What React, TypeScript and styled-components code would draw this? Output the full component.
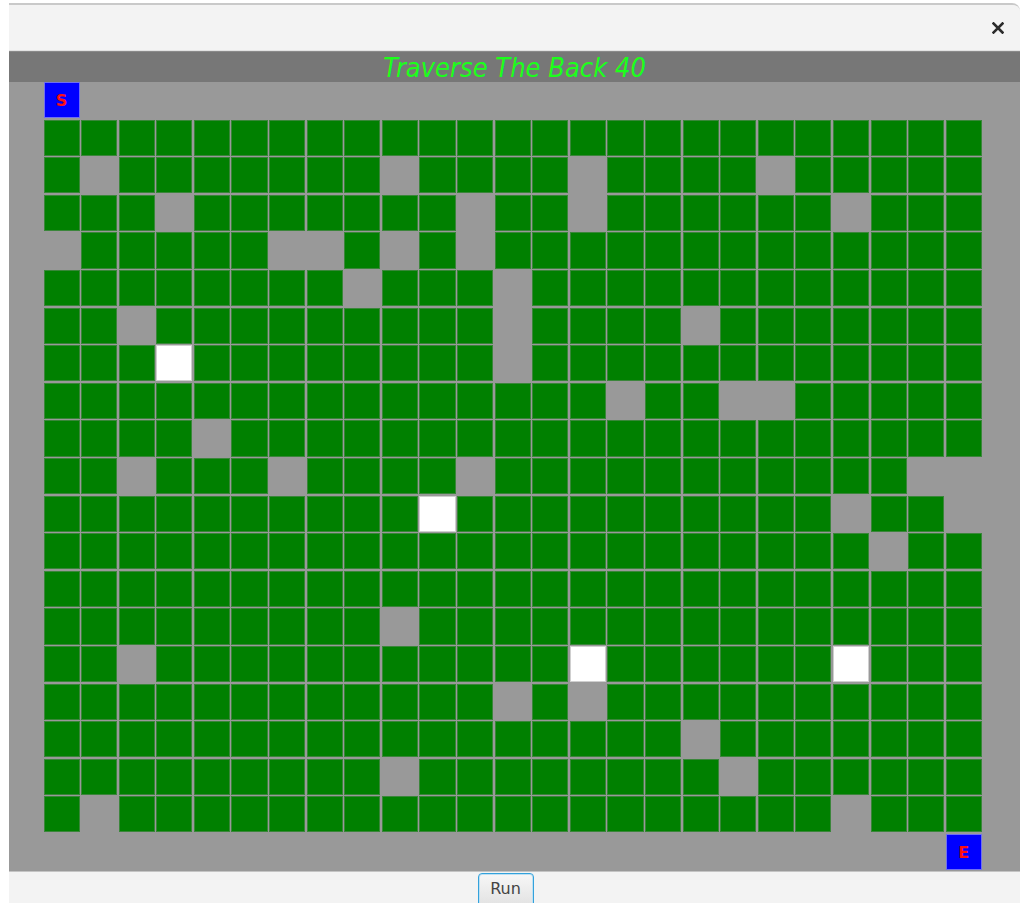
import React from 'react';
import styled, { createGlobalStyle } from 'styled-components';

const GlobalStyle = createGlobalStyle`
  html, body {
    margin: 0;
    padding: 0;
    background: #ffffff;
    font-family: "DejaVu Sans", "Liberation Sans", sans-serif;
  }
`;

type CellKind = 'field' | 'rock' | 'hay' | 'start' | 'end';

const INNER_COLS = 25;
const INNER_ROWS = 19;

// rocks (gray) and hay bales (white) per row, columns counted from 1
const obstacles: Record<number, { rock?: number[]; hay?: number[] }> = {
  2: { rock: [2, 10, 15, 20] },
  3: { rock: [4, 12, 15, 22] },
  4: { rock: [1, 7, 8, 10, 12] },
  5: { rock: [9, 13] },
  6: { rock: [3, 13, 18] },
  7: { rock: [13], hay: [4] },
  8: { rock: [16, 19, 20] },
  9: { rock: [5] },
  10: { rock: [3, 7, 12, 24, 25] },
  11: { rock: [22, 25], hay: [11] },
  12: { rock: [23] },
  14: { rock: [10] },
  15: { rock: [3], hay: [15, 22] },
  16: { rock: [13, 15] },
  17: { rock: [18] },
  18: { rock: [10, 19] },
  19: { rock: [2, 22] },
};

const buildBoard = (): CellKind[][] => {
  const rows: CellKind[][] = [];
  for (let r = 0; r <= INNER_ROWS + 1; r++) {
    const row: CellKind[] = [];
    for (let c = 0; c <= INNER_COLS + 1; c++) {
      const border = r === 0 || c === 0 || r === INNER_ROWS + 1 || c === INNER_COLS + 1;
      if (r === 0 && c === 1) row.push('start');
      else if (r === INNER_ROWS + 1 && c === INNER_COLS) row.push('end');
      else if (border) row.push('rock');
      else if (obstacles[r]?.hay?.includes(c)) row.push('hay');
      else if (obstacles[r]?.rock?.includes(c)) row.push('rock');
      else row.push('field');
    }
    rows.push(row);
  }
  return rows;
};

const board = buildBoard();

export default function App() {
  return (
    <>
      <GlobalStyle />
      <Desktop>
        <Window>
          <Header>
            <CloseButton aria-label="close">
              <svg width="12" height="12" viewBox="0 0 12 12">
                <path d="M1.5 1.5 L10.5 10.5 M10.5 1.5 L1.5 10.5" stroke="#2b2b2b" strokeWidth="2.6" strokeLinecap="square" />
              </svg>
            </CloseButton>
          </Header>
          <TitleBar>
            <Title>Traverse The Back 40</Title>
          </TitleBar>
          <Field>
            {board.map((row, r) =>
              row.map((kind, c) => (
                <Cell key={`${r}-${c}`} $kind={kind}>
                  {kind === 'start' && 'S'}
                  {kind === 'end' && 'E'}
                </Cell>
              ))
            )}
          </Field>
          <Footer>
            <RunButton>Run</RunButton>
          </Footer>
        </Window>
      </Desktop>
    </>
  );
}

const Desktop = styled.div`
  width: 1024px;
  height: 903px;
  padding: 3px 4px 0 9px;
  box-sizing: border-box;
  overflow: hidden;
  background: #ffffff;
`;

const Window = styled.div`
  display: flex;
  flex-direction: column;
  border-top: 2px solid #c9c9c9;
  border-top-right-radius: 8px;
  overflow: hidden;
  background: #f3f3f3;
`;

const Header = styled.div`
  height: 46px;
  box-sizing: border-box;
  display: flex;
  align-items: center;
  justify-content: flex-end;
  padding: 0 16px 0 0;
  background: #f3f3f3;
  border-bottom: 1px solid #e2e2e2;
`;

const CloseButton = styled.div`
  display: flex;
  width: 12px;
  height: 12px;
  margin-top: 1px;
`;

const TitleBar = styled.div`
  height: 31px;
  display: flex;
  align-items: center;
  justify-content: center;
  background: #777777;
  border-top: 1px solid #8a8a8a;
  box-sizing: border-box;
`;

const Title = styled.span`
  font-family: "DejaVu Sans Condensed", "DejaVu Sans", sans-serif;
  font-stretch: condensed;
  font-style: italic;
  font-size: 27px;
  color: #1bff1b;
  line-height: 1;
`;

const Field = styled.div`
  display: grid;
  grid-template-columns: 34.5px repeat(25, 37.6px) 1fr;
  grid-template-rows: 37.7px repeat(20, 37.6px);
  background: #999999;
  height: 789px;
`;

const cellColors: Record<CellKind, { bg: string; edge: string }> = {
  field: { bg: '#008000', edge: '#3a863a' },
  rock: { bg: '#999999', edge: '#999999' },
  hay: { bg: '#ffffff', edge: '#cfcfcf' },
  start: { bg: '#0000ff', edge: '#7070f0' },
  end: { bg: '#0000ff', edge: '#7070f0' },
};

const Cell = styled.div<{ $kind: CellKind }>`
  margin: 0 1.5px 1.5px 0;
  background: ${({ $kind }) => cellColors[$kind].bg};
  border: 1px solid ${({ $kind }) => cellColors[$kind].edge};
  display: flex;
  align-items: center;
  justify-content: center;
  font-family: "DejaVu Sans", sans-serif;
  font-weight: bold;
  font-size: 16px;
  color: #ff1010;
`;

const Footer = styled.div`
  flex: 1;
  height: 32px;
  display: flex;
  justify-content: center;
  align-items: flex-start;
  padding: 1px 18px 0 0;
  background: #f3f3f3;
  box-sizing: border-box;
  border-top: 1px solid #c4c4c4;
`;

const RunButton = styled.button`
  width: 56px;
  height: 34px;
  border: 1px solid #33a2dc;
  border-radius: 4px;
  box-shadow: inset 0 0 0 1px #bfe0f2;
  background: linear-gradient(#f7f7f7, #e2e2e2);
  font-family: "DejaVu Sans", sans-serif;
  font-size: 16px;
  color: #444444;
  padding: 0 0 4px;
`;
